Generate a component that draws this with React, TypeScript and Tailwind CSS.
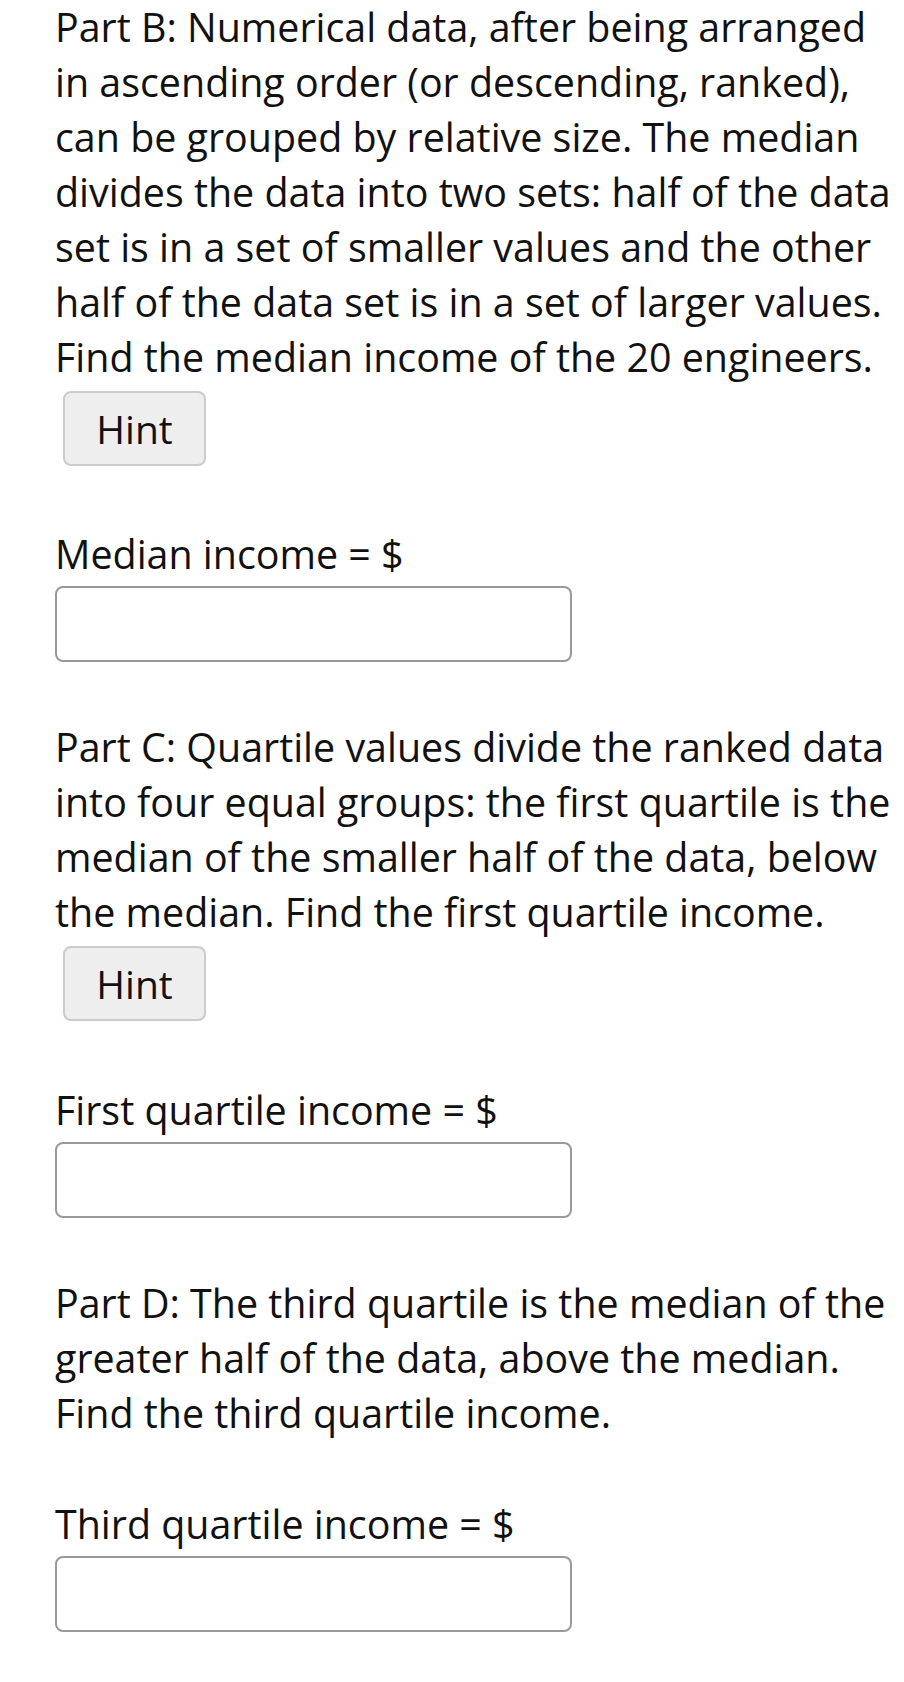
import * as React from "react";
import clsx from "clsx";

function HintButton({ className }: { className?: string }) {
  return (
    <button
      type="button"
      className={clsx(
        "ml-2 block h-[75px] w-[143px] rounded-[8px] border-2 border-[#cbcbcb] bg-[#eeeeee] text-[39px] leading-none text-[#111]",
        className
      )}
    >
      Hint
    </button>
  );
}

function AnswerField({ label, className }: { label: string; className?: string }) {
  return (
    <div className={className}>
      <label className="block">{label}</label>
      <input
        type="text"
        className="mt-[4px] block h-[76px] w-[517px] rounded-[8px] border-2 border-[#999999] bg-white px-3 outline-none"
      />
    </div>
  );
}

export default function App() {
  return (
    <div
      className="min-h-[1682px] bg-white pl-[55px] pr-[8px] text-[39.4px] leading-[55px] text-[#111]"
      style={{ fontFamily: '"Open Sans", "Noto Sans", sans-serif' }}
    >
      {/* Part B */}
      <p>
        Part B: Numerical data, after being arranged in ascending order (or descending, ranked), can
        be grouped by relative size. The median divides the data into two sets: half of the data set
        is in a set of smaller values and the other half of the data set is in a set of larger
        values. Find the median income of the 20 engineers.
      </p>
      <HintButton className="mt-[6px]" />
      <AnswerField label="Median income = $" className="mt-[61px]" />

      {/* Part C */}
      <p className="mt-[58px]">
        Part C: Quartile values divide the ranked data into four equal groups: the first quartile is
        the median of the smaller half of the data, below the median. Find the first quartile
        income.
      </p>
      <HintButton className="mt-[6px]" />
      <AnswerField label="First quartile income = $" className="mt-[62px]" />

      {/* Part D */}
      <p className="mt-[58px]">
        Part D: The third quartile is the median of the greater half of the data, above the median.
        Find the third quartile income.
      </p>
      <AnswerField label="Third quartile income = $" className="mt-[56px]" />
    </div>
  );
}
